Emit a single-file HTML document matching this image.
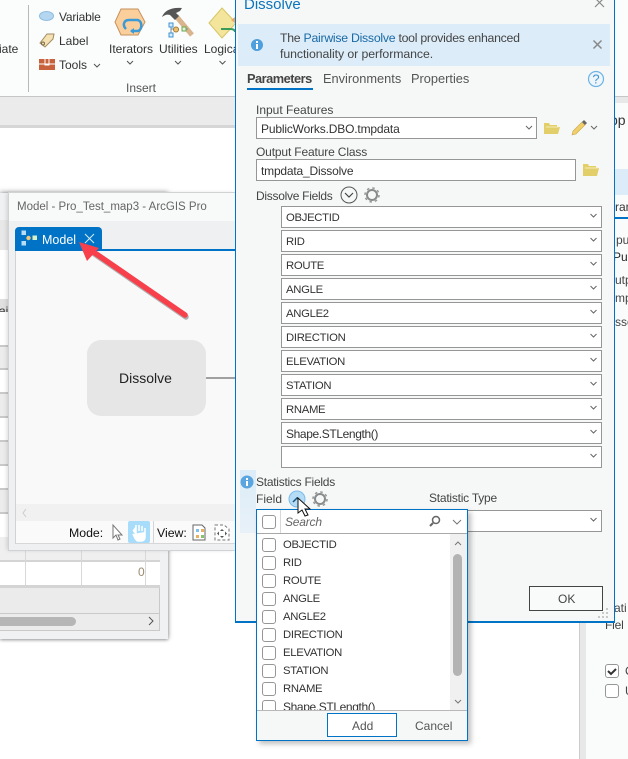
<!DOCTYPE html>
<html><head><meta charset="utf-8"><style>
html,body{margin:0;padding:0;background:#fff}
#r{position:relative;width:628px;height:759px;overflow:hidden;background:#fff;font:12px/16px "Liberation Sans",sans-serif;color:#444}
#r div,#r span,#r svg{position:absolute}
.t{white-space:nowrap}
.box{background:#fff;border:1px solid #969696;box-sizing:border-box;height:22px;left:281px;width:321px}
.fl{left:286px;white-space:nowrap;color:#333;font-size:11.300px;letter-spacing:-.3px}
.cb{left:262px;width:14px;height:14px;box-sizing:border-box;border:1px solid #969696;border-radius:3px;background:#fff}
.li{left:283px;white-space:nowrap;color:#333;font-size:11.300px;letter-spacing:-.3px}
.row{left:0;height:2px;background:#c9c9c9;width:9px}
.bl{color:#0b74bd}
</style></head><body><div id="r">

<!-- ribbon -->
<div style="left:0;top:0;width:628px;height:96px;background:#fbfcfc"></div>
<div style="left:0;top:96px;width:628px;height:1px;background:#c4c6c7"></div>
<div style="left:0;top:97px;width:628px;height:28px;background:#ebebeb"></div>
<div style="left:0;top:125px;width:628px;height:3px;background:#d6d6d6"></div>
<div style="left:28px;top:5px;width:1px;height:87px;background:#b8b8b8"></div>
<span class="t" style="left:-1px;top:41px;color:#333">iate</span>
<span class="t" style="left:59px;top:9px;color:#333;letter-spacing:-.2px">Variable</span>
<span class="t" style="left:59px;top:33px;color:#333">Label</span>
<span class="t" style="left:59px;top:57px;color:#333">Tools</span>
<span class="t" style="left:109px;top:41px;color:#333">Iterators</span>
<span class="t" style="left:159px;top:41px;color:#333">Utilities</span>
<span class="t" style="left:204px;top:41px;color:#333">Logical</span>
<span class="t" style="left:126px;top:80px;color:#555">Insert</span>
<svg style="left:0;top:0" width="240" height="96" viewBox="0 0 240 96">
<ellipse cx="46.500" cy="16" rx="7" ry="4.500" fill="#b5d6f0" stroke="#8dbbe0"/>
<path d="M40 43l7-9 7 0 0 0-1 5-8 8z" fill="#f5e2b2" stroke="#a08a60"/><circle cx="43" cy="43.500" r="1.500" fill="none" stroke="#7a6a50"/>
<rect x="39" y="59" width="16" height="11" fill="#c8623c"/><path d="M39 64h16" stroke="#fff"/><rect x="45" y="57" width="4" height="8" fill="none" stroke="#fff"/>
<path d="M121 9h17l7 13-7 13h-17l-6-13z" fill="#fbcf9c" stroke="#c6925c"/>
<path d="M126 29c-4-4-2-9 3-9h8c5 0 6 9 1 11h-7" fill="none" stroke="#3b9ad8" stroke-width="2.500"/><path d="M134 28l-4 3 4 3z" fill="#3b9ad8"/>
<path d="M176 16l16 19" stroke="#d9b48c" stroke-width="5"/>
<path d="M162 17c2-6 9-10 20-9l-2 3-4 2 3 3-4 4-5-5c-3-1-5 0-8 2z" fill="#555"/>
<path d="M171 24v10M171 29h8M184 29h4" stroke="#6f8fa8" fill="none"/>
<rect x="169" y="23" width="4" height="4" fill="#d6ebfa" stroke="#3f93d2"/><rect x="169" y="33" width="4" height="4" fill="#d6ebfa" stroke="#3f93d2"/><circle cx="176" cy="29.500" r="2.500" fill="#f0c070" stroke="#a07a30"/><rect x="182" y="27" width="4" height="4" fill="#e2f2d8" stroke="#6aa84f"/>
<path d="M222 8l14 15-14 15-13-15z" fill="#f3e59b" stroke="#d8c565"/>
<path d="M221 29h9c3 0 5 1 5 3" fill="none" stroke="#3d9b5a" stroke-width="2"/><path d="M231 20l4-3v6z" fill="#f0a860"/>
<path d="M94 64l3 3 3-3M127 61l3 3 3-3M175 61l3 3 3-3M219.500 61l3 3 3-3" fill="none" stroke="#555"/>
</svg>

<!-- back table -->
<div style="left:0;top:193px;width:168px;height:446px;background:#f0f1f2;box-shadow:0 -1px 5px rgba(0,0,0,.35),0 1px 3px rgba(0,0,0,.3)"></div>
<div style="left:0;top:220px;width:9px;height:30px;background:#e8e8e8"></div>
<div style="left:0;top:250px;width:9px;height:49px;background:#fff"></div>
<div style="left:0;top:299px;width:9px;height:13px;background:#e0e0e0"></div>
<span class="t" style="left:-1px;top:303px;color:#333">ai</span>
<div style="left:0;top:312px;width:9px;height:33px;background:#fff"></div>
<div style="left:0;top:345px;width:9px;height:23px;background:#ececec"></div>
<div style="left:0;top:369px;width:9px;height:24px;background:#fff"></div>
<div style="left:0;top:393px;width:9px;height:24px;background:#ececec"></div>
<div style="left:0;top:417px;width:9px;height:24px;background:#fff"></div>
<div style="left:0;top:441px;width:9px;height:24px;background:#ececec"></div>
<div style="left:0;top:465px;width:9px;height:23px;background:#fff"></div>
<div style="left:0;top:488px;width:9px;height:25px;background:#ececec"></div>
<div style="left:0;top:513px;width:9px;height:24px;background:#fff"></div>
<div style="left:0;top:537px;width:160px;height:23px;background:#efefef"></div>
<div style="left:0;top:562px;width:160px;height:23px;background:#fff"></div>
<div class="row" style="top:345px"></div><div class="row" style="top:368px"></div><div class="row" style="top:392px"></div><div class="row" style="top:416px"></div><div class="row" style="top:440px"></div><div class="row" style="top:464px"></div><div class="row" style="top:488px"></div><div class="row" style="top:512px"></div>
<div style="left:0;top:560px;width:160px;height:2px;background:#d4d4d4"></div>
<div style="left:0;top:585px;width:160px;height:3px;background:#d4d4d4"></div>
<div style="left:25px;top:550px;width:1px;height:36px;background:#d8d8d8"></div>
<div style="left:81px;top:550px;width:1px;height:36px;background:#d8d8d8"></div>
<div style="left:145px;top:550px;width:1px;height:36px;background:#d8d8d8"></div>
<span class="t" style="left:138px;top:564px;color:#9a8a70">0</span>
<div style="left:0;top:588px;width:159px;height:25px;background:#ebebeb"></div>
<div style="left:0;top:613px;width:160px;height:1px;background:#c9c9c9"></div>
<div style="left:0;top:614px;width:159px;height:16px;background:#ececec"></div>
<div style="left:-5px;top:617px;width:81px;height:9px;border-radius:5px;background:#b6b6b6"></div>
<div style="left:0;top:630px;width:160px;height:1px;background:#c9c9c9"></div>
<div style="left:159px;top:588px;width:1px;height:42px;background:#c9c9c9"></div>
<svg style="left:146px;top:616px" width="10" height="10"><path d="M3 1l4 4-4 4" fill="none" stroke="#555"/></svg>

<!-- model window -->
<div style="left:9px;top:193px;width:226px;height:357px;background:#eef0f2;box-shadow:-2px 0 4px rgba(0,0,0,.15);outline:1px solid #d0d2d3"></div>
<div style="left:9px;top:193px;width:226px;height:28px;background:#f8f9f9"></div>
<span class="t" style="left:17px;top:199px;color:#666;font-size:11.500px">Model - Pro_Test_map3 - ArcGIS Pro</span>
<div style="left:15px;top:227px;width:87px;height:23px;background:#0073c6;border-radius:4px 4px 0 0"></div>
<div style="left:15px;top:249px;width:220px;height:2px;background:#0073c6"></div>
<span class="t" style="left:42px;top:232px;color:#fff;font-size:12.500px">Model</span>
<svg style="left:20px;top:230px" width="80" height="18" viewBox="0 0 80 18">
<rect x="1.500" y="0.500" width="4.500" height="4.500" fill="#b7dcf5"/><rect x="1.500" y="11" width="4.500" height="4.500" fill="#b7dcf5"/><circle cx="8.500" cy="8" r="2.200" fill="#f2c878"/><rect x="12.500" y="5.500" width="4.500" height="4.500" fill="#d8f0c8"/>
<path d="M65 4l9 9M74 4l-9 9" stroke="#d6ecfb" fill="none"/></svg>
<div style="left:15px;top:251px;width:220px;height:253px;background:#f9f9f9;border-left:1px solid #d0d2d3;box-sizing:border-box"></div>
<div style="left:16px;top:504px;width:219px;height:17px;background:#f1f1f1"></div>
<div style="left:16px;top:521px;width:219px;height:22px;background:#fafafa"></div>
<div style="left:15px;top:543px;width:220px;height:1px;background:#d5d7d8"></div>
<div style="left:15px;top:504px;width:1px;height:40px;background:#d0d2d3"></div>
<svg style="left:21px;top:508px" width="8" height="10"><path d="M5 1l-3 4 3 4" fill="none" stroke="#ccc"/></svg>
<div style="left:87px;top:340px;width:119px;height:76px;background:#e6e6e6;border-radius:14px"></div>
<span class="t" style="left:119px;top:370px;color:#222;font-size:14px">Dissolve</span>
<div style="left:206px;top:377px;width:29px;height:2px;background:#a0a0a0"></div>
<span class="t" style="left:69px;top:525px;color:#111;font-size:12.300px">Mode:</span>
<span class="t" style="left:157px;top:525px;color:#111;font-size:12.300px">View:</span>
<div style="left:128px;top:521px;width:22px;height:22px;background:#a8dcfb;border-radius:2px"></div>
<div style="left:153px;top:521px;width:1px;height:22px;background:#d5d5d5"></div>
<svg style="left:110px;top:521px" width="125" height="23" viewBox="110 521 125 23">
<path d="M113 525v13l3-3 2 5 2-1-2-4h4z" fill="#fff" stroke="#777"/>
<path d="M133 530l3 4v-8M136 531v-6M139 531v-6M142 531v-5M145 532v-4M145 532v5c0 3-2 4-4 4h-3c-2 0-3-3-5-7" fill="#fff" stroke="#fff" stroke-width="1.500"/>
<path d="M193 525h9l3 3v12h-12z" fill="#fff" stroke="#666"/><rect x="196" y="529" width="3" height="3" fill="#7cc0ee"/><rect x="201" y="529" width="3" height="3" fill="#e8b060"/><rect x="196" y="535" width="3" height="3" fill="#e8b060"/><rect x="201" y="535" width="3" height="3" fill="#8ac070"/>
<path d="M215 525h9l5 4v11h-14z" fill="#fff" stroke="#777" stroke-dasharray="3 2"/><path d="M222 529l-2 2h4zM222 538l-2-2h4zM217 533.500l2-2v4zM227 533.500l-2-2v4z" fill="#555"/>
</svg>

<!-- arrow -->
<svg style="left:60px;top:225px" width="140" height="105" viewBox="60 225 140 105">
<g fill="none" stroke="#000" stroke-opacity=".3" stroke-width="5.500" stroke-linecap="round" transform="translate(1 2)"><path d="M92 251l93 64"/></g>
<path d="M92 251l93 64" fill="none" stroke="#f7404b" stroke-width="5.500" stroke-linecap="round"/>
<path d="M79 242l20 6-12 13z" fill="#f7404b"/>
</svg>

<!-- right background -->
<div style="left:615px;top:97px;width:13px;height:6px;background:#e8e8e8"></div>
<div style="left:615px;top:103px;width:13px;height:656px;background:#fafbfb"></div>
<div style="left:579px;top:623px;width:1px;height:136px;background:#ccc"></div>
<div style="left:580px;top:623px;width:6px;height:136px;background:#e8e8e8"></div>
<div style="left:586px;top:623px;width:42px;height:136px;background:#fafbfb"></div>
<span class="t" style="left:610px;top:112px;color:#333;font-size:14px">pp</span>
<div style="left:615px;top:169px;width:13px;height:26px;background:#dcecf8"></div>
<span class="t" style="left:615px;top:199px;color:#333">ran</span>
<div style="left:615px;top:217px;width:13px;height:2px;background:#0073c6"></div>
<span class="t" style="left:616px;top:232px;color:#444">pu</span>
<span class="t" style="left:613px;top:249px;color:#222">Pub</span>
<span class="t" style="left:615px;top:272px;color:#444">utp</span>
<span class="t" style="left:615px;top:290px;color:#444">mp</span>
<span class="t" style="left:615px;top:314px;color:#444">sso</span>
<span class="t" style="left:614px;top:600px;color:#444">ati</span>
<span class="t" style="left:605px;top:617px;color:#444;letter-spacing:-.2px">Fiel</span>
<div class="cb" style="left:605px;top:664px"></div>
<svg style="left:606px;top:665px" width="12" height="12"><path d="M2 6l3 3 5-5" fill="none" stroke="#333" stroke-width="2"/></svg>
<div class="cb" style="left:605px;top:684px"></div>
<span class="t" style="left:625px;top:663px;color:#444">C</span>
<span class="t" style="left:625px;top:683px;color:#444">U</span>

<!-- dialog -->
<div style="left:235px;top:-5px;width:380px;height:628px;box-sizing:border-box;background:#f6f8f8;border:1px solid #0073c6;border-bottom-width:2px"></div>
<span class="t bl" style="left:244px;top:-3px;font-size:15px">Dissolve</span>
<svg style="left:594px;top:-3px" width="12" height="12"><path d="M1 1l9 9M10 1l-9 9" stroke="#888" fill="none" stroke-width="1.200"/></svg>
<div style="left:238px;top:24px;width:372px;height:42px;background:#dcecf8"></div>
<svg style="left:250px;top:38px" width="14" height="14"><circle cx="7" cy="7" r="6" fill="#4f9fdd"/><rect x="6" y="6" width="2" height="5" fill="#fff"/><rect x="6" y="3" width="2" height="2" fill="#fff"/></svg>
<span class="t" style="left:280px;top:30px;font-size:12.300px;letter-spacing:-.27px">The <span class="bl" style="position:static;color:#1a6aa6">Pairwise Dissolve</span> tool provides enhanced</span>
<span class="t" style="left:280px;top:46px;font-size:12.300px;letter-spacing:-.07px">functionality or performance.</span>
<svg style="left:592px;top:39px" width="12" height="12"><path d="M1.500 1.500l8 8M9.500 1.500l-8 8" stroke="#888" fill="none" stroke-width="1.500"/></svg>
<span class="t" style="left:247px;top:71px;font-size:12.800px;color:#444;font-weight:700;letter-spacing:-.5px">Parameters</span>
<span class="t" style="left:323px;top:71px;font-size:12.800px;color:#555">Environments</span>
<span class="t" style="left:411px;top:71px;font-size:12.800px;color:#555">Properties</span>
<div style="left:247px;top:88px;width:66px;height:2px;background:#0073c6"></div>
<svg style="left:587px;top:70px" width="18" height="18"><circle cx="9" cy="9" r="7.500" fill="#eef6fc" stroke="#6db3e6" stroke-width="1.200"/><text x="9" y="13.500" font-family="Liberation Sans" font-size="13" fill="#3f93d2" text-anchor="middle">?</text></svg>

<span class="t" style="left:256px;top:102px">Input Features</span>
<div class="box" style="left:256px;top:117px;width:281px"></div>
<span class="t" style="left:261px;top:121px;color:#333;letter-spacing:-.17px">PublicWorks.DBO.tmpdata</span>
<span class="t" style="left:256px;top:144px;letter-spacing:-.15px">Output Feature Class</span>
<div class="box" style="left:256px;top:159px;width:320px"></div>
<span class="t" style="left:261px;top:163px;color:#333;letter-spacing:-.19px">tmpdata_Dissolve</span>
<span class="t" style="left:256px;top:188px;letter-spacing:-.28px">Dissolve Fields</span>

<div class="box" style="top:206px"></div><span class="fl" style="top:210px">OBJECTID</span>
<div class="box" style="top:230px"></div><span class="fl" style="top:234px">RID</span>
<div class="box" style="top:254px"></div><span class="fl" style="top:258px">ROUTE</span>
<div class="box" style="top:278px"></div><span class="fl" style="top:282px">ANGLE</span>
<div class="box" style="top:302px"></div><span class="fl" style="top:306px">ANGLE2</span>
<div class="box" style="top:326px"></div><span class="fl" style="top:330px">DIRECTION</span>
<div class="box" style="top:350px"></div><span class="fl" style="top:354px">ELEVATION</span>
<div class="box" style="top:374px"></div><span class="fl" style="top:378px">STATION</span>
<div class="box" style="top:398px"></div><span class="fl" style="top:402px">RNAME</span>
<div class="box" style="top:422px"></div><span class="fl" style="top:426px;font-size:12px;letter-spacing:-.38px">Shape.STLength()</span>
<div class="box" style="top:446px"></div>

<div style="left:240px;top:470px;width:16px;height:63px;background:linear-gradient(#dcecf8,#e8f1f8)"></div>
<span class="t" style="left:256px;top:474px;letter-spacing:-.26px">Statistics Fields</span>
<span class="t" style="left:256px;top:491px">Field</span>
<span class="t" style="left:429px;top:490px;letter-spacing:-.23px">Statistic Type</span>
<div class="box" style="left:429px;top:510px;width:173px"></div>
<div style="left:529px;top:586px;width:74px;height:25px;box-sizing:border-box;border:1px solid #444;background:#f9fafa"></div>
<span class="t" style="left:558px;top:591px;color:#444">OK</span>

<svg style="left:235px;top:100px" width="393" height="530" viewBox="235 100 393 530">
<g fill="none" stroke="#666"><path d="M526 126l3 3 3-3M591 126l3 3 3-3M590.500 214l3 3 3-3M590.500 238l3 3 3-3M590.500 262l3 3 3-3M590.500 286l3 3 3-3M590.500 310l3 3 3-3M590.500 334l3 3 3-3M590.500 358l3 3 3-3M590.500 382l3 3 3-3M590.500 406l3 3 3-3M590.500 430l3 3 3-3M590.500 454l3 3 3-3M590.500 518l3 3 3-3"/></g>
<path d="M544 123h5l1 2h7v2h3l-2 7h-14z" fill="#e3cf6a"/>
<path d="M583 164h5l1 2h7v2h3l-2 8h-14z" fill="#e3cf6a"/><path d="M585 168h13" stroke="#f5ecb8"/>
<path d="M546 127h13" stroke="#f5ecb8"/>
<path d="M572 135l1-4 9-9 3 3-9 9z" fill="#f0cf6a" stroke="#c7a850" stroke-width=".6"/><path d="M582 122l2-2 3 3-2 2z" fill="#666"/>
<circle cx="349" cy="195" r="8" fill="none" stroke="#555"/><path d="M345 193l4 4 4-4" fill="none" stroke="#444" stroke-width="1.200"/>
<circle cx="372" cy="195" r="5" fill="none" stroke="#8a8a8a" stroke-width="2"/><circle cx="372" cy="195" r="7" fill="none" stroke="#999" stroke-width="1.600" stroke-dasharray="2.500 3"/>
<circle cx="320" cy="499" r="5" fill="none" stroke="#8a8a8a" stroke-width="2"/><circle cx="320" cy="499" r="7" fill="none" stroke="#999" stroke-width="1.600" stroke-dasharray="2.500 3"/>
<circle cx="247" cy="482" r="6.500" fill="#5aa5e0"/><rect x="246" y="481" width="2" height="5" fill="#fff"/><rect x="246" y="478" width="2" height="2" fill="#fff"/>
<circle cx="297" cy="499" r="8" fill="#b5dcf7" stroke="#7dbbe8"/><path d="M293 502l4-4 4 4" fill="none" stroke="#1a4f7a" stroke-width="1.500"/>
<g fill="#c8c8c8"><rect x="606" y="608" width="2" height="2"/><rect x="602" y="612" width="2" height="2"/><rect x="606" y="612" width="2" height="2"/><rect x="602" y="616" width="2" height="2"/><rect x="606" y="616" width="2" height="2"/><rect x="598" y="616" width="2" height="2"/></g>
</svg>

<!-- popup -->
<div style="left:256px;top:509px;width:212px;height:232px;box-sizing:border-box;background:#fff;border:1px solid #0073c6;box-shadow:3px 3px 5px rgba(0,0,0,.25)"></div>
<div style="left:257px;top:533px;width:210px;height:1px;background:#a8a8a8"></div>
<div style="left:280px;top:510px;width:1px;height:23px;background:#d8d8d8"></div>
<div class="cb" style="top:515px"></div>
<span class="t" style="left:285px;top:514px;font-style:italic;color:#666;letter-spacing:-.2px">Search</span>
<div style="left:450px;top:534px;width:17px;height:176px;background:#f0f0f0"></div>
<div style="left:453px;top:554px;width:9px;height:122px;background:#b3b3b3;border-radius:5px"></div>
<div class="cb" style="top:538px"></div><span class="li" style="top:537px">OBJECTID</span>
<div class="cb" style="top:556px"></div><span class="li" style="top:555px">RID</span>
<div class="cb" style="top:574px"></div><span class="li" style="top:573px">ROUTE</span>
<div class="cb" style="top:592px"></div><span class="li" style="top:591px">ANGLE</span>
<div class="cb" style="top:610px"></div><span class="li" style="top:609px">ANGLE2</span>
<div class="cb" style="top:628px"></div><span class="li" style="top:627px">DIRECTION</span>
<div class="cb" style="top:646px"></div><span class="li" style="top:645px">ELEVATION</span>
<div class="cb" style="top:664px"></div><span class="li" style="top:663px">STATION</span>
<div class="cb" style="top:682px"></div><span class="li" style="top:681px">RNAME</span>
<div class="cb" style="top:700px"></div><span class="li" style="top:699px;font-size:12px;letter-spacing:-.38px">Shape.STLength()</span>
<div style="left:257px;top:710px;width:210px;height:30px;background:#f6f8f8;border-top:1px solid #b8b8b8;box-sizing:border-box"></div>
<div style="left:327px;top:713px;width:70px;height:24px;box-sizing:border-box;border:1px solid #0073c6;background:#fff"></div>
<span class="t" style="left:352px;top:718px;color:#555">Add</span>
<span class="t" style="left:415px;top:718px;color:#555">Cancel</span>
<svg style="left:425px;top:510px" width="42" height="200" viewBox="425 510 42 200">
<circle cx="436" cy="520" r="3.500" fill="none" stroke="#666" stroke-width="1.500"/><path d="M433 523l-3 3" stroke="#666" stroke-width="2"/>
<path d="M453 520l4 4 4-4" fill="none" stroke="#777"/>
<path d="M455 545l3-3 3 3M455 700l3 3 3-3" fill="none" stroke="#777"/>
</svg>
<svg style="left:295px;top:497px;z-index:5" width="16" height="22"><path d="M3 1v15l4-3 3 6 3-1-3-6h5z" fill="#fff" stroke="#111"/></svg>

</div></body></html>
